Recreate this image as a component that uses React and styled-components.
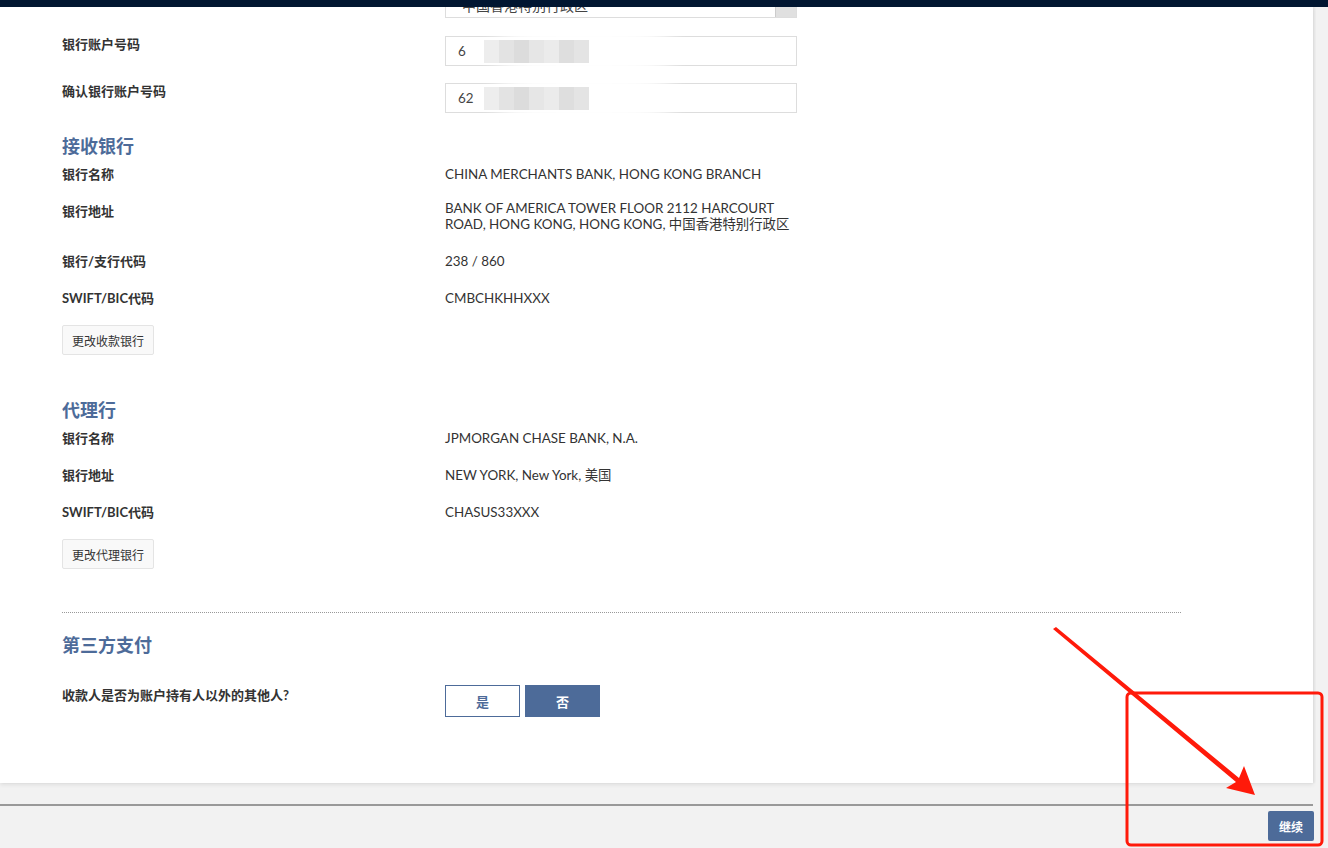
import React from 'react';
import styled, { createGlobalStyle } from 'styled-components';

const GlobalStyle = createGlobalStyle`
  html, body {
    margin: 0;
    padding: 0;
    background: #f2f2f2;
    font-family: Lato, "Noto Sans CJK SC", sans-serif;
    color: #333;
  }
  * { box-sizing: border-box; }
`;

const blue = '#4d6b99';

const Page = styled.div`
  position: relative;
  width: 1328px;
  height: 848px;
  overflow: hidden;
  background: #f2f2f2;
`;

const TopBar = styled.div`
  height: 7px;
  background: #011631;
  position: relative;
  z-index: 2;
`;

const Card = styled.div`
  width: 1313px;
  height: 776px;
  background: #fff;
  box-shadow: 0 2px 4px rgba(0, 0, 0, 0.08), 2px 0 2px rgba(0, 0, 0, 0.05);
  padding: 0 0 0 62px;
  overflow: hidden;
`;

const Row = styled.div`
  display: grid;
  grid-template-columns: 383px 352px;
  align-items: start;
  margin-bottom: ${(p) => p.gap || 21}px;
`;

const Label = styled.div`
  font-size: 13px;
  font-weight: 700;
  line-height: 16px;
  padding-top: ${(p) => p.pt || 0}px;
`;

const Value = styled.div`
  font-size: 13.4px;
  line-height: 16px;
  margin-top: ${(p) => (p.multi ? -3 : 0)}px;
`;

const SelectBox = styled.div`
  position: relative;
  height: 30px;
  margin-top: -19px;
  border: 1px solid #ddd;
  font-size: 14px;
  line-height: 34px;
  padding-left: 16px;
  color: #444;
  overflow: hidden;

  &::after {
    content: '';
    position: absolute;
    right: 0;
    top: 0;
    width: 20px;
    height: 100%;
    background: #e0e0e0;
    border-left: 1px solid #ccc;
  }
`;

const Input = styled.div`
  position: relative;
  height: 30px;
  border: 1px solid #ddd;
  font-size: 13.4px;
  line-height: 28px;
  padding-left: 12px;
  color: #444;
  display: flex;
  align-items: center;
`;

const Haze = styled.div`
  position: absolute;
  left: 30px;
  top: -8px;
  width: 216px;
  height: 44px;
  border-radius: 50%;
  background: rgba(255, 255, 255, 0.96);
  filter: blur(3px);
`;

const Mosaic = styled.div`
  position: absolute;
  left: 38px;
  top: 3px;
  display: flex;
`;

const Tile = styled.span`
  width: 15px;
  height: 23px;
  background: ${(p) => p.c};
`;

const Heading = styled.h2`
  margin: 0 0 ${(p) => p.mb || 8}px;
  font-size: 18px;
  line-height: 24px;
  font-weight: 700;
  color: ${blue};
`;

const GhostButton = styled.button`
  display: block;
  height: 30px;
  padding: 0 9px;
  border: 1px solid #e4e4e4;
  border-radius: 2px;
  background: #f9f9f9;
  font-family: inherit;
  font-size: 12px;
  color: #333;
  margin-bottom: ${(p) => p.mb || 43}px;
`;

const Divider = styled.hr`
  width: 1119px;
  margin: 0 0 20px;
  border: 0;
  border-top: 1px dotted #999;
`;

const Choice = styled.div`
  display: flex;
  gap: 5px;
`;

const ChoiceButton = styled.button`
  width: 75px;
  height: 32px;
  border: 1px solid ${blue};
  background: ${(p) => (p.active ? blue : '#fff')};
  color: ${(p) => (p.active ? '#fff' : blue)};
  font-family: inherit;
  font-size: 13px;
  font-weight: 700;
`;

const Footer = styled.div`
  width: 1313px;
  margin-top: 21px;
  border-top: 2px solid #999;
  display: flex;
  justify-content: flex-end;
  padding-top: 5px;
`;

const ContinueButton = styled.button`
  width: 46px;
  height: 30px;
  border: 0;
  border-radius: 2px;
  background: ${blue};
  color: #fff;
  font-family: inherit;
  font-size: 12px;
  font-weight: 700;
  margin-right: -1px;
`;

const Markup = styled.svg`
  position: absolute;
  left: 0;
  top: 0;
  pointer-events: none;
`;

const tiles = ['#ededed', '#e3e3e3', '#dcdcdc', '#e6e6e6', '#ebebeb', '#dedede', '#e4e4e4'];

const Blurred = () => (
  <>
    <Haze />
    <Mosaic>
      {tiles.map((c, i) => (
        <Tile key={i} c={c} />
      ))}
    </Mosaic>
  </>
);

const Info = ({ label, multi, gap, children }) => (
  <Row gap={gap}>
    <Label>{label}</Label>
    <Value multi={multi}>{children}</Value>
  </Row>
);

const App = () => (
  <Page>
    <GlobalStyle />
    <TopBar />
    <Card>
      <Row gap={18}>
        <div />
        <SelectBox>中国香港特别行政区</SelectBox>
      </Row>
      <Row gap={17}>
        <Label>银行账户号码</Label>
        <Input>
          6
          <Blurred />
        </Input>
      </Row>
      <Row gap={21}>
        <Label>确认银行账户号码</Label>
        <Input>
          62
          <Blurred />
        </Input>
      </Row>

      <Heading>接收银行</Heading>
      <Info label="银行名称">CHINA MERCHANTS BANK, HONG KONG BRANCH</Info>
      <Info label="银行地址" multi>
        BANK OF AMERICA TOWER FLOOR 2112 HARCOURT
        <br />
        ROAD, HONG KONG, HONG KONG, 中国香港特别行政区
      </Info>
      <Info label="银行/支行代码">238 / 860</Info>
      <Info label="SWIFT/BIC代码" gap={19}>CMBCHKHHXXX</Info>
      <GhostButton>更改收款银行</GhostButton>

      <Heading>代理行</Heading>
      <Info label="银行名称">JPMORGAN CHASE BANK, N.A.</Info>
      <Info label="银行地址">NEW YORK, New York, 美国</Info>
      <Info label="SWIFT/BIC代码" gap={19}>CHASUS33XXX</Info>
      <GhostButton mb={43}>更改代理银行</GhostButton>

      <Divider />
      <Heading mb={28}>第三方支付</Heading>
      <Row>
        <Label pt={2}>收款人是否为账户持有人以外的其他人?</Label>
        <Choice>
          <ChoiceButton>是</ChoiceButton>
          <ChoiceButton active>否</ChoiceButton>
        </Choice>
      </Row>
    </Card>
    <Footer>
      <ContinueButton>继续</ContinueButton>
    </Footer>

    <Markup width="1328" height="848" viewBox="0 0 1328 848">
      <rect x="1127" y="693" width="195" height="152" rx="4" fill="none" stroke="#ff1a0a" strokeWidth="3" />
      <polygon points="1053,629 1056,627 1239,778 1244,766 1255,795 1226,788 1236,782" fill="#ff1a0a" />
    </Markup>
  </Page>
);

export default App;
